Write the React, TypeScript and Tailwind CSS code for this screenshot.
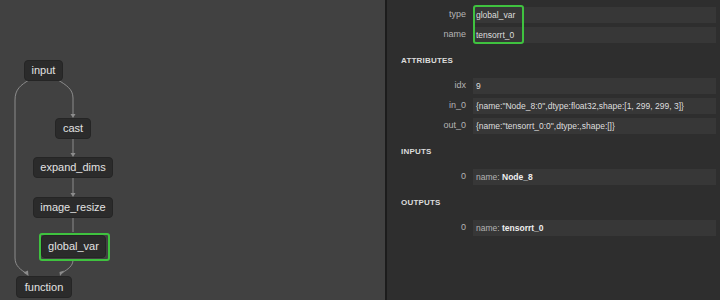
import React from 'react';

type GraphNode = { label: string; x: number; y: number; w: number; h: number };

const nodes: GraphNode[] = [
  { label: 'input', x: 24, y: 60, w: 39, h: 21 },
  { label: 'cast', x: 55, y: 118, w: 36, h: 21 },
  { label: 'expand_dims', x: 33, y: 157, w: 80, h: 21 },
  { label: 'image_resize', x: 33, y: 197, w: 80, h: 21 },
  { label: 'global_var', x: 41, y: 235, w: 65, h: 23 },
  { label: 'function', x: 16, y: 276, w: 56, h: 22 },
];

function Arrow({ x, y }: { x: number; y: number }) {
  return <path d={`M${x - 2.5} ${y - 4} L${x + 2.5} ${y - 4} L${x} ${y} Z`} fill="#8c8c8c" />;
}

function Graph() {
  return (
    <div className="relative w-[385px] h-full bg-[#414141] overflow-hidden">
      <svg className="absolute inset-0" width="385" height="300">
        <g fill="none" stroke="#8c8c8c" strokeWidth="1">
          <path d="M58 80 C66 85, 73 89, 73 98 L73 114" />
          <path d="M29 80 C21 85, 15 89, 15 100 L15 258 C15 266, 21 270, 26 273" />
          <path d="M73 139 L73 153" />
          <path d="M73 178 L73 193" />
          <path d="M73 218 L73 232" />
          <path d="M73 260 C73 266, 68 269, 62 273" />
        </g>
        <Arrow x={73} y={118} />
        <Arrow x={73} y={157} />
        <Arrow x={73} y={197} />
        <path d="M23.5 272.5 L28 270.5 L28.5 276 Z" fill="#8c8c8c" />
        <path d="M64.5 270.5 L60 276 L59.5 272 Z" fill="#8c8c8c" />
      </svg>
      {nodes.map((n) => (
        <div
          key={n.label}
          className="absolute flex items-center justify-center rounded-[4px] bg-[#2b2b2b] border border-[#252525] text-[11px] text-[#e2e2e2]"
          style={{ left: n.x, top: n.y, width: n.w, height: n.h }}
        >
          {n.label}
        </div>
      ))}
      <div className="absolute left-[39px] top-[233px] w-[71px] h-[28px] rounded-[3px] border-2 border-[#3fc23f]" />
    </div>
  );
}

function Row({ label, children }: { label: string; children: React.ReactNode }) {
  return (
    <div className="flex items-center h-[16px]">
      <div className="w-[79px] shrink-0 text-right text-[9px] text-[#b4b4b4]">{label}</div>
      <div className="ml-[7px] flex-1 h-full flex items-center bg-[#373737] pl-[3px] text-[8.5px] text-[#dedede] whitespace-nowrap overflow-hidden">
        {children}
      </div>
    </div>
  );
}

function Section({ title }: { title: string }) {
  return (
    <div className="h-[35px] flex items-center pl-[14px] text-[8px] font-bold text-[#dcdcdc] tracking-[0.2px]">
      {title}
    </div>
  );
}

export default function App() {
  return (
    <div className="flex w-[720px] h-[300px] bg-[#2e2e2e]" style={{ fontFamily: '"Liberation Sans", Arial, sans-serif' }}>
      <Graph />
      <div className="w-[2px] h-full bg-[#1c1c1c]" />
      <div className="relative flex-1 pt-[7px] pr-[4px]">
        <div className="flex flex-col gap-[4px]">
          <Row label="type">global_var</Row>
          <Row label="name">tensorrt_0</Row>
        </div>
        <Section title="ATTRIBUTES" />
        <div className="flex flex-col gap-[4px]">
          <Row label="idx">9</Row>
          <Row label="in_0">{'{name:"Node_8:0",dtype:float32,shape:[1, 299, 299, 3]}'}</Row>
          <Row label="out_0">{'{name:"tensorrt_0:0",dtype:,shape:[]}'}</Row>
        </div>
        <Section title="INPUTS" />
        <Row label="0">
          <span className="text-[#b4b4b4]">name:&nbsp;</span>
          <span className="font-bold text-[#eeeeee]">Node_8</span>
        </Row>
        <Section title="OUTPUTS" />
        <Row label="0">
          <span className="text-[#b4b4b4]">name:&nbsp;</span>
          <span className="font-bold text-[#eeeeee]">tensorrt_0</span>
        </Row>
        <div className="absolute left-[86px] top-[5px] w-[51px] h-[39px] rounded-[3px] border-2 border-[#3fc23f]" />
      </div>
    </div>
  );
}
